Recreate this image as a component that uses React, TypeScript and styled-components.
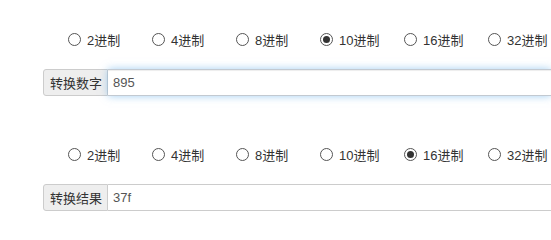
import React from "react";
import styled, { createGlobalStyle, css } from "styled-components";

const Global = createGlobalStyle`
  html, body { margin: 0; padding: 0; overflow: hidden; background: #fff; }
  body { font-family: "Liberation Sans", Arial, "Noto Sans CJK SC", sans-serif; }
`;

const Page = styled.div`
  padding: 29px 0 0 43px;
  display: flex;
  flex-direction: column;
  gap: 48px;
`;

const Section = styled.div`
  display: flex;
  flex-direction: column;
  gap: 18px;
`;

const RadioRow = styled.div`
  box-sizing: border-box;
  display: flex;
  align-items: center;
  height: 22px;
  padding: 0 0 2px 25px;
`;

const RadioItem = styled.label`
  display: flex;
  align-items: center;
  width: 84px;
  flex: none;
  font-size: 13px;
  color: #333;
  white-space: nowrap;
`;

const Circle = styled.span<{ $checked?: boolean }>`
  box-sizing: border-box;
  width: 13px;
  height: 13px;
  border-radius: 50%;
  border: 1px solid #555;
  background: #fff;
  margin-right: 6px;
  display: flex;
  align-items: center;
  justify-content: center;
  ${(p) =>
    p.$checked &&
    css`
      &::after {
        content: "";
        width: 7px;
        height: 7px;
        border-radius: 50%;
        background: #333;
      }
    `}
`;

const InputGroup = styled.div`
  display: flex;
  height: 27px;
  width: 508px;
`;

const Addon = styled.span`
  box-sizing: border-box;
  display: flex;
  align-items: center;
  padding: 0 5px 0 6px;
  background: #eee;
  border: 1px solid #ccc;
  border-radius: 3px 0 0 3px;
  font-size: 13px;
  color: #333;
  white-space: nowrap;
`;

const Field = styled.div<{ $focused?: boolean }>`
  box-sizing: border-box;
  flex: 1;
  display: flex;
  align-items: center;
  padding: 0 5px;
  border: 1px solid #ccc;
  border-left: none;
  border-right: none;
  font-size: 13px;
  color: #555;
  background: #fff;
  ${(p) =>
    p.$focused &&
    css`
      border-color: #c2c9d1;
      box-shadow: inset 0 1px 1px rgba(0, 0, 0, 0.075), 0 0 8px rgba(102, 175, 233, 0.6);
    `}
`;

const bases = ["2进制", "4进制", "8进制", "10进制", "16进制", "32进制"];

function Radios({ checked }: { checked: string }) {
  return (
    <RadioRow>
      {bases.map((b) => (
        <RadioItem key={b}>
          <Circle $checked={b === checked} />
          {b}
        </RadioItem>
      ))}
    </RadioRow>
  );
}

export default function App() {
  return (
    <>
      <Global />
      <Page>
        <Section>
          <Radios checked="10进制" />
          <InputGroup>
            <Addon>转换数字</Addon>
            <Field $focused>895</Field>
          </InputGroup>
        </Section>
        <Section>
          <Radios checked="16进制" />
          <InputGroup>
            <Addon>转换结果</Addon>
            <Field>37f</Field>
          </InputGroup>
        </Section>
      </Page>
    </>
  );
}
